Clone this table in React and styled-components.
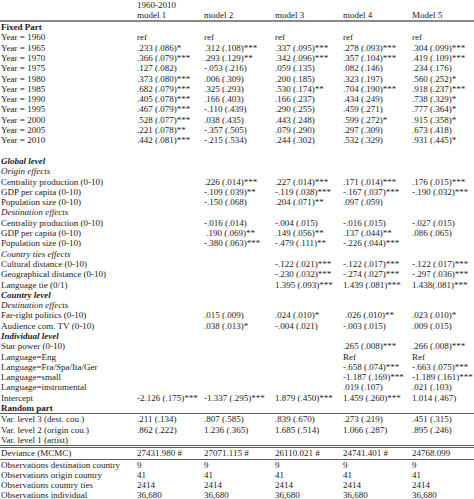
import styled, { createGlobalStyle, css } from 'styled-components'

const GlobalStyle = createGlobalStyle`
  html, body {
    margin: 0;
    padding: 0;
    background: #fff;
    overflow: hidden;
  }
`

const Page = styled.div`
  width: 474px;
  height: 499px;
  overflow: hidden;
  background: #fff;
`

const Table = styled.table`
  margin-top: -0.5px;
  width: 474px;
  table-layout: fixed;
  border-collapse: collapse;
  font-family: 'Liberation Serif', 'Times New Roman', serif;
  font-size: 9px;
  color: #1a1a1a;
`

const Row = styled.tr`
  height: 10.3px;

  ${props => props.$headRule && css`
    & > td { border-bottom: 2px solid #8a8a8a; }
  `}

  ${props => props.$ruleBelow && css`
    & > td { border-bottom: 1px solid #5e5e5e; }
  `}

  ${props => props.$doubleAbove && css`
    & > td { border-top: 3px double #5e5e5e; }
  `}
`

const Label = styled.td`
  padding: 0 0 0 1px;
  line-height: 10.3px;
  white-space: nowrap;
  overflow: visible;
  font-weight: ${props => (props.$bold ? 700 : 400)};
  font-style: ${props => (props.$italic ? 'italic' : 'normal')};
`

const Cell = styled.td`
  padding: 0;
  line-height: 10.3px;
  white-space: pre;
  overflow: visible;
`

const widths = [137, 67, 71, 68, 69, 62]

const sp = '\u00a0'

const rows = [
  { cells: ['1960-2010'] },
  { cells: ['model 1', 'model 2', 'model 3', 'model 4', 'Model 5'], headRule: true },
  { label: 'Fixed Part', bold: true },
  { label: 'Year = 1960', cells: ['ref', 'ref', 'ref', 'ref', 'ref'] },
  { label: 'Year = 1965', cells: ['.233 (.086)*', '.312 (.108)***', '.337 (.095)***', '.278 (.093)***', '.304 (.099)***'] },
  { label: 'Year = 1970', cells: ['.366 (.079)***', '.293 (.129)**', '.342 (.096)***', '.357 (.104)***', '.419 (.109)***'] },
  { label: 'Year = 1975', cells: ['.127 (.082)', '-.053 (.216)', '.059 (.135)', '.082 (.146)', '.234 (.176)'] },
  { label: 'Year = 1980', cells: ['.373 (.080)***', '.006 (.309)', '.200 (.185)', '.323 (.197)', '.560 (.252)*'] },
  { label: 'Year = 1985', cells: ['.682 (.079)***', '.325 (.293)', '.530 (.174)**', '.704 (.190)***', '.918 (.237)***'] },
  { label: 'Year = 1990', cells: ['.405 (.078)***', '.166 (.403)', '.166 (.237)', '.434 (.249)', '.738 (.329)*'] },
  { label: 'Year = 1995', cells: ['.467 (.079)***', '-.110 (.439)', '.290 (.255)', '.459 (.271)', '.777 (.364)*'] },
  { label: 'Year = 2000', cells: ['.528 (.077)***', '.038 (.435)', '.443 (.248)', '.599 (.272)*', '.915 (.358)*'] },
  { label: 'Year = 2005', cells: ['.221 (.078)**', '-.357 (.505)', '.079 (.290)', '.297 (.309)', '.673 (.418)'] },
  { label: 'Year = 2010', cells: ['.442 (.081)***', '-.215 (.534)', '.244 (.302)', '.532 (.329)', '.931 (.445)*'] },
  { label: '' },
  { label: 'Global level', bold: true, italic: true },
  { label: 'Origin effects', italic: true },
  { label: 'Centrality production (0-10)', cells: ['', '.226 (.014)***', '.227 (.014)***', '.171 (.014)***', '.176 (.015)***'] },
  { label: 'GDP per capita (0-10)', cells: ['', '-.109 (.039)**', '-.119 (.038)***', '-.167 (.037)***', '-.190 (.032)***'] },
  { label: 'Population size (0-10)', cells: ['', '-.150 (.068)', '.204 (.071)**', '.097 (.059)', ''] },
  { label: 'Destination effects', italic: true },
  { label: 'Centrality production (0-10)', cells: ['', '-.016 (.014)', '-.004 (.015)', '-.016 (.015)', '-.027 (.015)'] },
  { label: 'GDP per capita (0-10)', cells: ['', sp + '.190 (.069)**', '.149 (.056)**', '.137 (.044)**', '.086 (.065)'] },
  { label: 'Population size (0-10)', cells: ['', '-.380 (.063)***', '-.479 (.111)**', '-.226 (.044)***', ''] },
  { label: 'Country ties effects', italic: true },
  { label: 'Cultural distance (0-10)', cells: ['', '', '-.122 (.021)***', '-.122 (.017)***', '-.122 (.017)***'] },
  { label: 'Geographical distance (0-10)', cells: ['', '', '-.230 (.032)***', '-.274 (.027)***', '-.297 (.036)***'] },
  { label: 'Language tie (0/1)', cells: ['', '', '1.395 (.093)***', '1.439 (.081)***', '1.438(.081)***'] },
  { label: 'Country level', bold: true, italic: true },
  { label: 'Destination effects', italic: true },
  { label: 'Far-right politics (0-10)', cells: ['', '.015 (.009)', '.024 (.010)*', sp + '.026 (.010)**', '.023 (.010)*'] },
  { label: 'Audience com. TV (0-10)', cells: ['', '.038 (.013)*', '-.004 (.021)', '-.003 (.015)', '.009 (.015)'] },
  { label: 'Individual level', bold: true, italic: true },
  { label: 'Star power (0-10)', cells: ['', '', '', '.265 (.008)***', '.266 (.008)***'] },
  { label: 'Language=Eng', cells: ['', '', '', 'Ref', 'Ref'] },
  { label: 'Language=Fra/Spa/Ita/Ger', cells: ['', '', '', '-.658 (.074)***', '-.663 (.075)***'] },
  { label: 'Language=small', cells: ['', '', '', '-1.187 (.169)***', '-1.189 (.161)***'] },
  { label: 'Language=instrumental', cells: ['', '', '', '.019 (.107)', '.021 (.103)'] },
  { label: 'Intercept', cells: ['-2.126 (.175)***', '-1.337 (.295)***', '1.879 (.450)***', '1.459 (.260)***', '1.014 (.467)'] },
  { label: 'Random part', bold: true, ruleBelow: true },
  { label: 'Var. level 3 (dest. cou.)', cells: ['.211 (.134)', '.807 (.585)', '.839 (.670)', '.273 (.219)', '.451 (.315)'] },
  { label: 'Var. level 2 (origin cou.)', cells: ['.862 (.222)', '1.236 (.365)', '1.685 (.514)', '1.066 (.287)', '.895 (.246)'] },
  { label: 'Var. level 1 (artist)' },
  { label: 'Deviance (MCMC)', cells: ['27431.980 #', '27071.115 #', '26110.021 #', '24741.401 #', '24768.099'], doubleAbove: true, ruleBelow: true },
  { label: 'Observations destination country', cells: ['9', '9', '9', '9', '9'] },
  { label: 'Observations origin country', cells: ['41', '41', '41', '41', '41'] },
  { label: 'Observations country ties', cells: ['2414', '2414', '2414', '2414', '2414'] },
  { label: 'Observations individual', cells: ['36,680', '36,680', '36,680', '36,680', '36,680'] }
]

function App () {
  return (
    <Page>
      <GlobalStyle />
      <Table>
        <colgroup>
          {widths.map((w, i) => <col key={i} style={{ width: w }} />)}
        </colgroup>
        <tbody>
          {rows.map((row, i) => {
            const cells = row.cells || []
            return (
              <Row
                key={i}
                $headRule={row.headRule}
                $ruleBelow={row.ruleBelow}
                $doubleAbove={row.doubleAbove}
              >
                <Label $bold={row.bold} $italic={row.italic}>{row.label || ''}</Label>
                {[0, 1, 2, 3, 4].map(c => <Cell key={c}>{cells[c] || ''}</Cell>)}
              </Row>
            )
          })}
        </tbody>
      </Table>
    </Page>
  )
}

export default App
